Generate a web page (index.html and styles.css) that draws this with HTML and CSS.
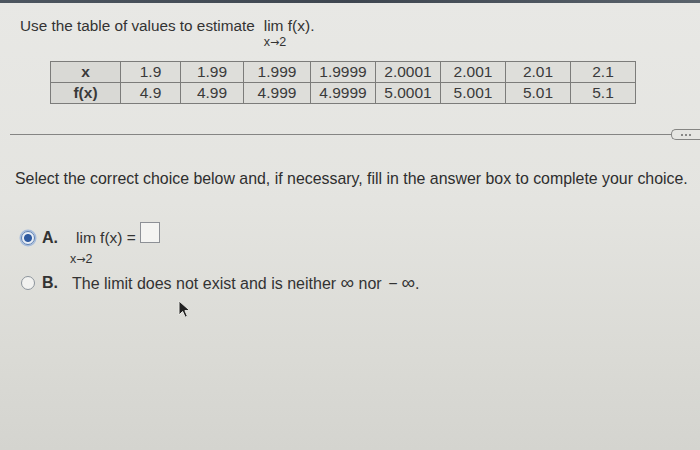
FILE: index.html
```html
<!DOCTYPE html>
<html>
<head>
<meta charset="utf-8">
<link rel="stylesheet" href="styles.css">
</head>
<body>
<div class="topbar"></div>
<div class="page">
  <div class="question">
    <span class="qtext">Use the table of values to estimate</span>
    <span class="lim">
      <span class="lim-top">lim f(x).</span>
      <span class="lim-sub">x<span class="arrow">→</span>2</span>
    </span>
  </div>
  <table class="values">
    <tr>
      <th>x</th><td>1.9</td><td>1.99</td><td>1.999</td><td>1.9999</td><td>2.0001</td><td>2.001</td><td>2.01</td><td>2.1</td>
    </tr>
    <tr>
      <th>f(x)</th><td>4.9</td><td>4.99</td><td>4.999</td><td>4.9999</td><td>5.0001</td><td>5.001</td><td>5.01</td><td>5.1</td>
    </tr>
  </table>
  <div class="divider">
    <div class="line"></div>
    <div class="more"><span class="dot"></span><span class="dot"></span><span class="dot"></span></div>
  </div>
  <p class="instr">Select the correct choice below and, if necessary, fill in the answer box to complete your choice.</p>
  <div class="choices">
    <div class="choice choice-a">
      <span class="radio checked"></span>
      <span class="label">A.</span>
      <span class="lim lim-a">
        <span class="lim-top">lim f(x) = <span class="answer"></span></span>
        <span class="lim-sub">x<span class="arrow">→</span>2</span>
      </span>
    </div>
    <div class="choice choice-b">
      <span class="radio"></span>
      <span class="label">B.</span>
      <span class="btext">The limit does not exist and is neither <span class="inf">∞</span> nor <span class="minus">−</span><span class="inf">∞</span>.</span>
    </div>
  </div>
  <svg class="cursor" width="14" height="19" viewBox="0 0 14 19"><path d="M1 1 L1 15 L4.6 11.4 L7.2 17.2 L9.4 16.2 L6.9 10.6 L11.8 10.6 Z" fill="#222" stroke="#e8e8e4" stroke-width="1"/></svg>
</div>
</body>
</html>
```
FILE: styles.css
```css
html, body {
  margin: 0;
  padding: 0;
}
body {
  width: 700px;
  height: 450px;
  overflow: hidden;
  background: linear-gradient(180deg, #e8e8e5 0%, #e4e4e0 45%, #dadad5 80%, #d4d4cf 100%);
  font-family: "Liberation Sans", Arial, sans-serif;
  color: #333;
  position: relative;
}
.topbar {
  height: 3px;
  background: linear-gradient(90deg, #4d5660, #3e4650 50%, #5a636c);
}
.question {
  display: flex;
  align-items: flex-start;
  padding: 14px 0 0 20px;
  font-size: 15.3px;
  line-height: 18px;
}
.qtext {
  margin-right: 9px;
}
.lim {
  display: inline-flex;
  flex-direction: column;
}
.lim-top {
  font-size: 15.5px;
}
.lim-sub {
  font-size: 12.5px;
  line-height: 15px;
  margin-left: 0;
}
.arrow {
  font-family: "DejaVu Sans", sans-serif;
  font-size: 11px;
}
.values {
  border-collapse: collapse;
  margin: 11px 0 0 50px;
  background: #dededa;
  font-size: 15.5px;
  color: #3a3a3a;
}
.values th, .values td {
  border: 1.5px solid #7c7c7a;
  height: 20px;
  padding: 0;
  text-align: center;
  line-height: 18px;
}
.values th {
  width: 69px;
  font-weight: bold;
  background: #d9d9d5;
}
.values td { width: 64px; }
.values td:nth-child(2) { width: 59px; }
.values td:nth-child(3) { width: 62px; }
.values td:nth-child(4) { width: 66px; }
.divider {
  display: flex;
  align-items: center;
  margin: 25px 0 0 10px;
}
.line {
  flex: 1;
  height: 1px;
  background: #858583;
}
.more {
  display: flex;
  align-items: center;
  justify-content: center;
  gap: 2px;
  width: 28px;
  height: 9px;
  border: 1px solid #858583;
  border-right: none;
  border-radius: 5px 0 0 5px;
  background: #e6e6e2;
}
.dot {
  width: 2px;
  height: 2px;
  border-radius: 50%;
  background: #6a6a68;
}
.instr {
  margin: 30px 0 0 15px;
  font-size: 15.9px;
  line-height: 18px;
  color: #2e2e2e;
}
.choices {
  margin: 41px 0 0 21px;
}
.choice {
  display: flex;
  align-items: flex-start;
  font-size: 16px;
  line-height: 18px;
}
.radio {
  width: 12px;
  height: 12px;
  border-radius: 50%;
  border: 1.5px solid #8c949c;
  background: #f2f2f0;
  margin-top: 2px;
  margin-right: 7px;
  box-sizing: content-box;
  flex: none;
}
.radio.checked {
  border-color: #5b7fb4;
  background: radial-gradient(circle, #2f5aa0 0 3.5px, #e9eef6 4.5px);
  box-shadow: 0 0 0 1.5px #a5bbdc;
}
.label {
  font-weight: bold;
  width: 30px;
  flex: none;
}
.lim-a .lim-top {
  display: flex;
  align-items: flex-start;
  font-size: 15.5px;
  margin-left: 4px;
}
.lim-a .lim-sub {
  margin-left: -2px;
  margin-top: 5px;
}
.answer {
  display: inline-block;
  width: 18px;
  height: 19px;
  border: 1px solid #8d9096;
  background: #f4f4f2;
  margin-left: 4px;
  margin-top: -7px;
}
.choice-b {
  margin-top: 7px;
}
.inf {
  font-size: 19px;
  line-height: 18px;
}
.minus {
  margin: 0 4px 0 2px;
}
.cursor {
  position: absolute;
  left: 178px;
  top: 300px;
}
```
